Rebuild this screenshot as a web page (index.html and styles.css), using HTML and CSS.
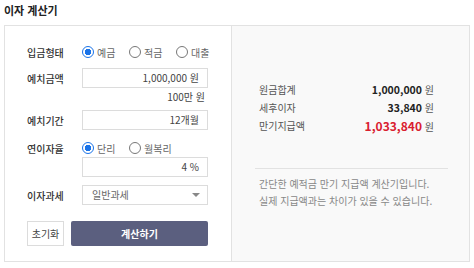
FILE: index.html
```html
<!DOCTYPE html>
<html lang="ko">
<head>
    <meta charset="UTF-8">
    <title>이자 계산기</title>
    <link rel="stylesheet" href="styles.css">
</head>
<body>
    <h2 class="title">이자 계산기</h2>
    <div class="calc-box">
        <div class="calc-form">
            <div class="form-row row-type">
                <span class="label">입금형태</span>
                <div class="radio-group">
                    <label class="radio radio-wide"><span class="dot checked"></span>예금</label>
                    <label class="radio radio-wide"><span class="dot"></span>적금</label>
                    <label class="radio"><span class="dot"></span>대출</label>
                </div>
            </div>
            <div class="form-row row-amount">
                <span class="label">예치금액</span>
                <div class="field">1,000,000 원</div>
            </div>
            <div class="hint">100만 원</div>
            <div class="form-row row-period">
                <span class="label">예치기간</span>
                <div class="field">12개월</div>
            </div>
            <div class="form-row row-rate">
                <span class="label">연이자율</span>
                <div class="radio-group">
                    <label class="radio radio-wide"><span class="dot checked"></span>단리</label>
                    <label class="radio"><span class="dot"></span>월복리</label>
                </div>
            </div>
            <div class="form-row row-rate-input">
                <span class="label"></span>
                <div class="field">4 %</div>
            </div>
            <div class="form-row row-tax">
                <span class="label">이자과세</span>
                <div class="field select">
                    <span>일반과세</span>
                    <span class="caret"></span>
                </div>
            </div>
            <div class="btn-row">
                <button class="reset-btn">초기화</button>
                <button class="calc-btn">계산하기</button>
            </div>
        </div>
        <div class="calc-result">
            <div class="result-row">
                <span>원금합계</span>
                <span><b>1,000,000</b> 원</span>
            </div>
            <div class="result-row">
                <span>세후이자</span>
                <span><b>33,840</b> 원</span>
            </div>
            <div class="result-row">
                <span>만기지급액</span>
                <span><b class="total">1,033,840</b> 원</span>
            </div>
            <p class="note">간단한 예적금 만기 지급액 계산기입니다.<br>실제 지급액과는 차이가 있을 수 있습니다.</p>
        </div>
    </div>
</body>
</html>
```

FILE: styles.css
```css
* {
    margin: 0;
    padding: 0;
    box-sizing: border-box;
}

body {
    font-family: 'Noto Sans CJK KR', 'Noto Sans', sans-serif;
    font-size: 10px;
    color: #333;
    background-color: #fff;
    padding: 0 4px;
}

.title {
    font-size: 11px;
    font-weight: bold;
    line-height: 20px;
    height: 25px;
    color: #222;
}

.calc-box {
    display: flex;
    width: 466px;
    height: 237px;
    border: 1px solid #e2e2e2;
}

.calc-form {
    width: 227px;
    padding: 16px 0 0 22px;
    border-right: 1px solid #e2e2e2;
}

.form-row {
    display: flex;
    align-items: center;
}

.label {
    width: 55px;
    font-weight: 500;
    color: #333;
}

.row-type {
    height: 20px;
}

.row-amount {
    margin-top: 6px;
}

.row-period {
    margin-top: 4px;
}

.row-rate {
    height: 18px;
    margin-top: 9px;
}

.row-tax {
    margin-top: 8px;
}

.radio-group {
    display: flex;
    align-items: center;
}

.radio {
    display: flex;
    align-items: center;
    color: #666;
}

.radio-wide {
    width: 47px;
}

.dot {
    width: 12px;
    height: 12px;
    border: 1px solid #777;
    border-radius: 50%;
    margin-right: 3px;
    background-color: #fff;
}

.dot.checked {
    border-color: #1a73e8;
    background: radial-gradient(circle, #1a73e8 0 3px, #fff 3.5px);
}

.field {
    width: 126px;
    height: 20px;
    border: 1px solid #dcdcdc;
    text-align: right;
    padding-right: 8px;
    line-height: 18px;
    color: #444;
}

.hint {
    width: 178px;
    height: 18px;
    line-height: 18px;
    text-align: right;
    color: #444;
}

.select {
    display: flex;
    justify-content: space-between;
    align-items: center;
    text-align: left;
    padding: 0 7px 0 9px;
    color: #666;
}

.caret {
    width: 0;
    height: 0;
    border-left: 4px solid transparent;
    border-right: 4px solid transparent;
    border-top: 4px solid #888;
}

.btn-row {
    display: flex;
    margin-top: 16px;
    height: 25px;
}

.reset-btn {
    width: 37px;
    border: 1px solid #dcdcdc;
    background-color: #fff;
    font-family: inherit;
    font-size: 10px;
    color: #444;
}

.calc-btn {
    width: 137px;
    margin-left: 7px;
    border: none;
    border-radius: 2px;
    background-color: #5b5f7f;
    color: #fff;
    font-family: inherit;
    font-size: 10px;
    font-weight: bold;
}

.calc-result {
    flex: 1;
    background-color: #f9f9f9;
    padding: 55px 21px 0 23px;
}

.result-row {
    display: flex;
    justify-content: space-between;
    height: 18px;
    line-height: 18px;
    padding: 0 14px 0 4px;
    color: #555;
}

.result-row b {
    color: #222;
    font-size: 10.5px;
}

.result-row b.total {
    color: #d9202f;
    font-size: 12px;
}

.note {
    margin-top: 33px;
    border-top: 1px solid #e2e2e2;
    padding: 6px 0 0 4px;
    line-height: 17px;
    color: #888;
}
```
